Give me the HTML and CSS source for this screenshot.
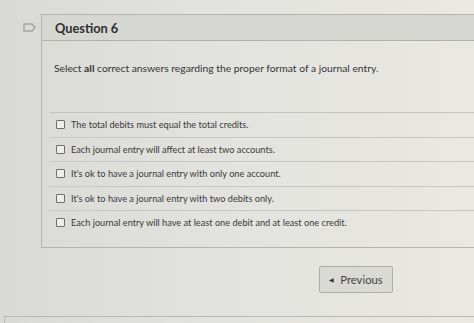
FILE: index.html
```html
<!DOCTYPE html>
<html lang="en">
<head>
<meta charset="utf-8">
<title>Question 6</title>
<link rel="stylesheet" href="styles.css">
</head>
<body>
<div class="page">
  <div class="row">
    <div class="gutter">
      <svg class="flag" width="13" height="9" viewBox="0 0 13 9" aria-hidden="true">
        <path d="M1 1 H9 L12 4.5 L9 8 H1 Z" fill="none" stroke="#a3a3a1" stroke-width="1.4" stroke-linejoin="round"/>
      </svg>
    </div>
    <section class="panel">
      <header class="panel-head"><h2 class="title">Question 6</h2></header>
      <div class="panel-body">
        <p class="prompt">Select <strong>all</strong> correct answers regarding the proper format of a journal entry.</p>
        <ul class="answers">
          <li class="answer"><span class="box"></span>The total debits must equal the total credits.</li>
          <li class="answer"><span class="box"></span>Each journal entry will affect at least two accounts.</li>
          <li class="answer"><span class="box"></span>It's ok to have a journal entry with only one account.</li>
          <li class="answer"><span class="box"></span>It's ok to have a journal entry with two debits only.</li>
          <li class="answer"><span class="box"></span>Each journal entry will have at least one debit and at least one credit.</li>
        </ul>
      </div>
    </section>
  </div>
  <div class="nav">
    <button class="prev"><span class="tri">&#9664;</span>Previous</button>
  </div>
  <div class="next-box"></div>
</div>
</body>
</html>
```

FILE: styles.css
```css
html, body {
  margin: 0;
  padding: 0;
}
body {
  width: 474px;
  height: 323px;
  overflow: hidden;
  background: linear-gradient(90deg, #d9d9d6 0%, #e2e2de 45%, #e9e8e3 100%);
  font-family: Lato, "Open Sans", sans-serif;
  color: #3b3b3b;
}
.page {
  padding-top: 14px;
}
.row {
  display: flex;
  align-items: flex-start;
}
.gutter {
  width: 41px;
  flex: none;
  display: flex;
  justify-content: flex-start;
  padding-left: 23px;
  padding-top: 9px;
  box-sizing: border-box;
}
.flag {
  display: block;
}
.panel {
  flex: 1;
  min-width: 0;
  border: 1px solid #b3b3b0;
  border-right: none;
}
.panel-head {
  height: 25px;
  background: #d6d6d3;
  border-bottom: 1px solid #b0b0ad;
  display: flex;
  align-items: center;
  padding-left: 13px;
}
.title {
  margin: 0;
  font-size: 12.8px;
  font-weight: 700;
  color: #2f2f2f;
}
.panel-body {
  padding: 20px 0 12px 8px;
}
.prompt {
  margin: 0 0 37px 4px;
  font-size: 10.3px;
  line-height: 14px;
  color: #353535;
  white-space: nowrap;
}
.prompt strong {
  font-weight: 700;
}
.answers {
  list-style: none;
  margin: 0;
  padding: 0;
  border-top: 1px solid #c2c2bf;
}
.answer {
  height: 23.5px;
  display: flex;
  align-items: center;
  padding-left: 6px;
  font-size: 9.2px;
  color: #3a3a3a;
  border-bottom: 1px solid #c6c6c3;
  white-space: nowrap;
}
.answer:last-child {
  border-bottom: none;
}
.box {
  width: 7px;
  height: 7px;
  border: 1px solid #6e6e6c;
  border-radius: 1px;
  background: #ecece9;
  margin-right: 6px;
  flex: none;
}
.nav {
  display: flex;
  padding-left: 319px;
  padding-top: 18px;
}
.prev {
  width: 74px;
  height: 27px;
  box-sizing: border-box;
  background: #d9d9d5;
  border: 1px solid #aeaeab;
  border-radius: 2px;
  font-family: Lato, "Open Sans", sans-serif;
  font-size: 11.3px;
  color: #444;
  display: flex;
  align-items: center;
  justify-content: center;
  padding: 0;
}
.tri {
  font-size: 6px;
  margin-right: 6px;
  color: #333;
}
.next-box {
  margin-top: 23px;
  margin-left: 4px;
  height: 20px;
  border-top: 1px solid #b8b8b5;
  border-left: 1px solid #b8b8b5;
}
```
